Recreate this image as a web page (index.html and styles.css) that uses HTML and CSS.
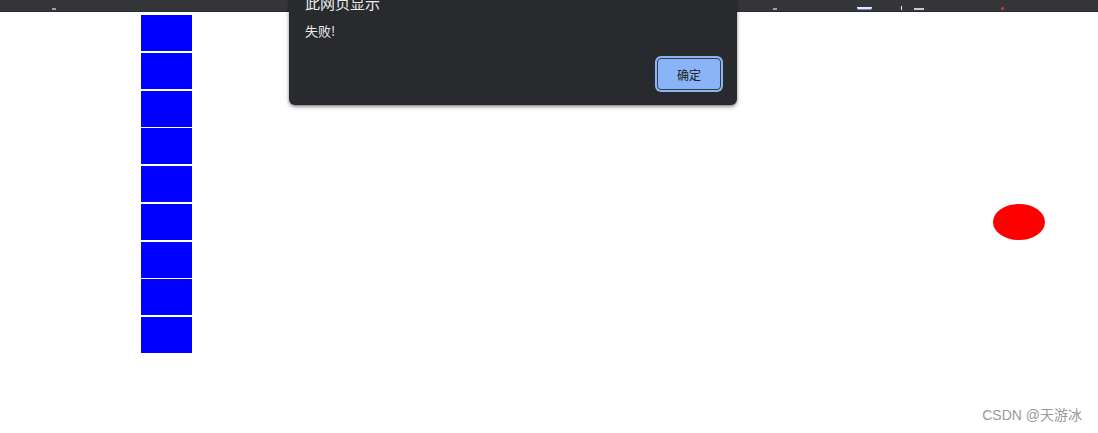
FILE: index.html
```html
<!DOCTYPE html>
<html lang="zh">
<head>
<meta charset="utf-8">
<link rel="stylesheet" href="styles.css">
</head>
<body>
<div class="topbar">
  <span class="tb-icon tb-a"></span>
  <span class="tb-icon tb-b"></span>
  <span class="tb-icon tb-c"></span>
  <span class="tb-icon tb-d"></span>
  <span class="tb-icon tb-e"></span>
  <span class="tb-icon tb-f"></span>
</div>
<div class="page">
  <div class="column">
    <div class="block"></div>
    <div class="block"></div>
    <div class="block"></div>
    <div class="block"></div>
    <div class="block"></div>
    <div class="block"></div>
    <div class="block"></div>
    <div class="block"></div>
    <div class="block"></div>
  </div>
</div>
<div class="ball"></div>
<div class="dialog">
  <div class="dlg-title">此网页显示</div>
  <div class="dlg-msg">失败!</div>
  <div class="dlg-actions">
    <button class="dlg-btn">确定</button>
  </div>
</div>
<div class="watermark">CSDN @天游冰</div>
</body>
</html>
```
FILE: styles.css
```css
html, body {
  margin: 0;
  padding: 0;
  width: 1098px;
  height: 433px;
  overflow: hidden;
  background: #ffffff;
  font-family: "Microsoft YaHei", "Noto Sans CJK SC", "Liberation Sans", sans-serif;
}
.topbar {
  height: 12px;
  background: #35363a;
  border-bottom: 1px solid #2a2b2e;
  box-sizing: border-box;
  position: relative;
}
.tb-icon {
  position: absolute;
  bottom: 1px;
  display: block;
}
.tb-a { left: 52px; width: 4px; height: 2px; background: #9aa0a6; }
.tb-b { left: 773px; width: 4px; height: 2px; background: #9aa0a6; }
.tb-c { left: 857px; width: 15px; height: 3px; background: #e8eaed; border-bottom: 1px solid #6c7bff; box-sizing: border-box; border-radius: 0 0 2px 2px; }
.tb-d { left: 901px; width: 1px; height: 4px; background: #e8eaed; }
.tb-e { left: 914px; width: 10px; height: 2px; background: #c8cacd; }
.tb-f { left: 1001px; width: 3px; height: 3px; background: #e53935; border-radius: 50%; }
.page {
  padding: 3px 0 0 141px;
}
.column {
  display: flex;
  flex-direction: column;
  gap: 1.75px;
  width: 51px;
}
.block {
  height: 36px;
  background: #0000ff;
}
.ball {
  position: absolute;
  left: 993px;
  top: 204px;
  width: 52px;
  height: 36px;
  border-radius: 50%;
  background: #ff0000;
}
.dialog {
  position: absolute;
  left: 289px;
  top: 0;
  width: 448px;
  height: 105px;
  background: #292a2d;
  border-radius: 0 0 6px 6px;
  box-shadow: 0 2px 4px rgba(0,0,0,0.35), 0 1px 2px rgba(0,0,0,0.25);
  padding: 0 16px;
  box-sizing: border-box;
  display: flex;
  flex-direction: column;
  color: #e8eaed;
}
.dlg-title {
  font-size: 15px;
  line-height: 18px;
  margin-top: -6px;
}
.dlg-msg {
  font-size: 13px;
  line-height: 16px;
  margin-top: 11px;
}
.dlg-actions {
  display: flex;
  justify-content: flex-end;
  margin-top: 19px;
}
.dlg-btn {
  width: 64px;
  height: 32px;
  box-sizing: border-box;
  background: #8ab4f8;
  border: 1px solid #3c4043;
  border-radius: 4px;
  box-shadow: 0 0 0 2px #8ab4f8;
  font-family: "Microsoft YaHei", "Noto Sans CJK SC", sans-serif;
  font-size: 12px;
  color: #202124;
  padding: 0;
  margin-right: 0;
}
.watermark {
  position: absolute;
  right: 16px;
  bottom: 9px;
  font-size: 14px;
  color: #999999;
  font-family: "Liberation Sans", "Noto Sans CJK SC", sans-serif;
}
```
